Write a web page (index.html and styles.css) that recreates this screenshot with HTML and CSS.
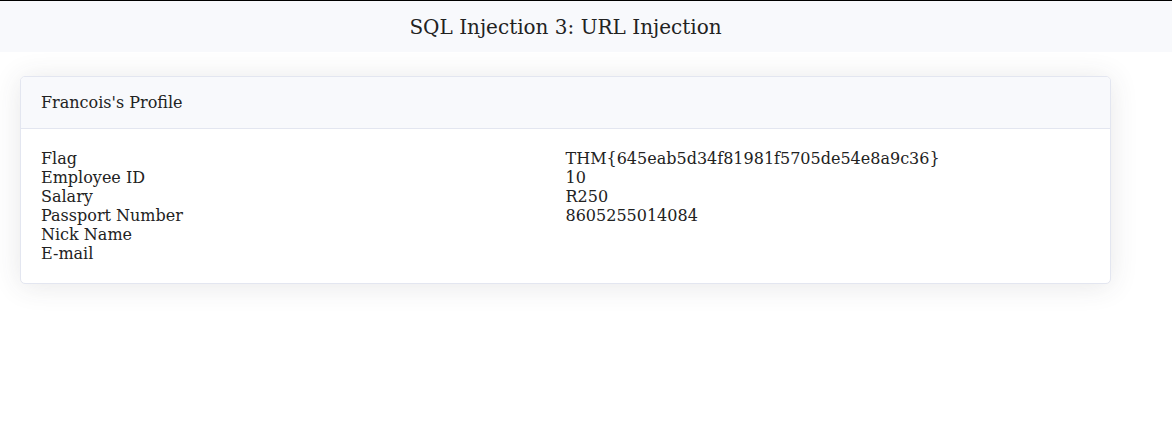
FILE: index.html
```html
<!DOCTYPE html>
<html>
<head>
<meta charset="utf-8">
<title>SQL Injection 3: URL Injection</title>
<link rel="stylesheet" href="styles.css">
</head>
<body>
<div class="topbar">
  <div class="wrap"><h1 class="title">SQL Injection 3: URL Injection</h1></div>
</div>
<div class="wrap main">
  <div class="card">
    <div class="card-header">Francois's Profile</div>
    <div class="card-body">
      <div class="row"><div class="label">Flag</div><div class="value">THM{645eab5d34f81981f5705de54e8a9c36}</div></div>
      <div class="row"><div class="label">Employee ID</div><div class="value">10</div></div>
      <div class="row"><div class="label">Salary</div><div class="value">R250</div></div>
      <div class="row"><div class="label">Passport Number</div><div class="value">8605255014084</div></div>
      <div class="row"><div class="label">Nick Name</div><div class="value"></div></div>
      <div class="row"><div class="label">E-mail</div><div class="value"></div></div>
    </div>
  </div>
</div>
</body>
</html>
```
FILE: styles.css
```css
html, body {
  margin: 0;
  padding: 0;
  background: #fff;
}
body {
  border-top: 1px solid #000;
  font-family: "DejaVu Serif", serif;
  font-size: 16px;
  color: #222;
  min-height: 428px;
}
.topbar {
  background: #f8f9fc;
  height: 51px;
}
.wrap {
  margin-left: 20px;
  width: 1091px;
}
.topbar .wrap {
  height: 100%;
  display: flex;
  align-items: center;
  justify-content: center;
}
.title {
  margin: 0;
  padding-top: 1px;
  font-size: 20px;
  font-weight: normal;
  line-height: 24px;
}
.main {
  padding-top: 24px;
  padding-bottom: 60px;
}
.card {
  border: 1px solid #e3e6f0;
  border-radius: 5px;
  background: #fff;
  box-shadow: 0 2px 28px 0 rgba(58, 59, 69, 0.12);
  overflow: hidden;
}
.card-header {
  background: #f8f9fc;
  border-bottom: 1px solid #e3e6f0;
  padding: 16px 20px;
  line-height: 19px;
}
.card-body {
  padding: 20px;
}
.row {
  display: grid;
  grid-template-columns: 1fr 1fr;
  line-height: 19px;
  min-height: 19px;
}
```
